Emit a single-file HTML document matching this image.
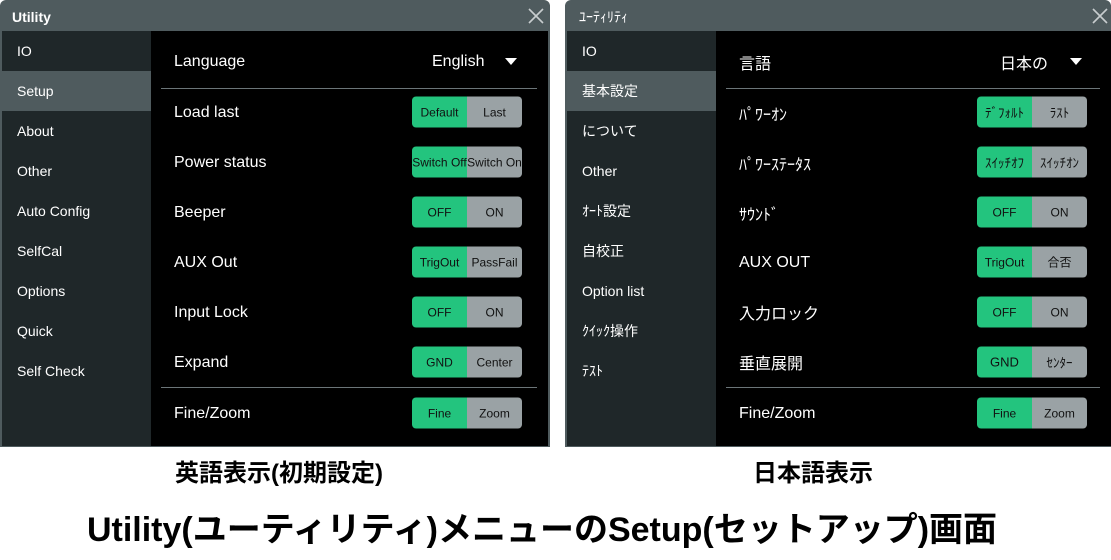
<!DOCTYPE html>
<html><head><meta charset="utf-8"><style>
*{margin:0;padding:0;box-sizing:border-box}
body{width:1111px;height:560px;background:#fff;position:relative;overflow:hidden;font-family:"Liberation Sans","Noto Sans CJK JP",sans-serif}
.p{position:absolute;top:0;height:447px;background:#4f5b5e;border-radius:6px 6px 0 0}
.tb{position:absolute;left:0;right:0;top:0;height:31px;color:#fff;font-size:14px;font-weight:bold;padding:9px 0 0 12px}
.x{position:absolute;right:4px;top:6px;width:20px;height:20px}
.sb{position:absolute;left:2px;top:31px;width:149px;bottom:1px;background:#1f2729}
.it{height:40px;line-height:40px;color:#fff;font-size:14px;padding-left:15px}
.it.s{background:#4f5b5e}
.ct{position:absolute;left:151px;top:31px;right:2px;bottom:1px;background:#000}
.r{position:absolute;left:23px;color:#fff;font-size:16px;transform:translateY(-50%)}
.sep{position:absolute;left:10px;right:11px;height:1px;background:#6b7578}
.tg{position:absolute;width:110px;height:31px;border-radius:4px;overflow:hidden;display:flex;font-size:12px;color:#111;transform:translateY(-50%)}
.tg span{flex:1;display:flex;align-items:center;justify-content:center;white-space:nowrap;background:#9aa2a5}
.tg span.g{background:#23c47e}
.tg.k{font-size:13px}
.lv{position:absolute;color:#fff;font-size:16px;transform:translateY(-50%)}
.tri{position:absolute;width:0;height:0;border-left:6px solid transparent;border-right:6px solid transparent;border-top:7px solid #fff}
.cap{position:absolute;font-weight:bold;color:#000;white-space:nowrap;transform:translateX(-50%)}
</style></head><body>

<div class="p" style="left:0;width:550px">
<div class="tb">Utility</div>
<svg class="x" viewBox="0 0 20 20"><path d="M3 3L17 17M17 3L3 17" stroke="#c8cdcf" stroke-width="1.6"/></svg>
<div class="sb">
<div class="it">IO</div><div class="it s">Setup</div><div class="it">About</div><div class="it">Other</div><div class="it">Auto Config</div><div class="it">SelfCal</div><div class="it">Options</div><div class="it">Quick</div><div class="it">Self Check</div>
</div>
<div class="ct">
<div class="r" style="top:31px">Language</div>
<div class="lv" style="top:31px;left:281px">English</div>
<div class="tri" style="top:27px;left:354px"></div>
<div class="sep" style="top:57px"></div>
<div class="r" style="top:82px">Load last</div><div class="tg" style="top:81px;left:261px"><span class="g">Default</span><span>Last</span></div>
<div class="r" style="top:132px">Power status</div><div class="tg" style="top:131px;left:261px"><span class="g">Switch Off</span><span>Switch On</span></div>
<div class="r" style="top:182px">Beeper</div><div class="tg" style="top:181px;left:261px"><span class="g">OFF</span><span>ON</span></div>
<div class="r" style="top:232px">AUX Out</div><div class="tg" style="top:231px;left:261px"><span class="g">TrigOut</span><span>PassFail</span></div>
<div class="r" style="top:282px">Input Lock</div><div class="tg" style="top:281px;left:261px"><span class="g">OFF</span><span>ON</span></div>
<div class="r" style="top:332px">Expand</div><div class="tg" style="top:331px;left:261px"><span class="g">GND</span><span>Center</span></div>
<div class="sep" style="top:356px"></div>
<div class="r" style="top:383px">Fine/Zoom</div><div class="tg" style="top:382px;left:261px"><span class="g">Fine</span><span>Zoom</span></div>
</div>
</div>

<div class="p" style="left:565px;width:546px">
<div class="tb" style="font-weight:normal;font-size:14px;padding:7px 0 0 14px">ﾕｰﾃｨﾘﾃｨ</div>
<svg class="x" viewBox="0 0 20 20" style="right:1px"><path d="M3 3L17 17M17 3L3 17" stroke="#c8cdcf" stroke-width="1.6"/></svg>
<div class="sb">
<div class="it">IO</div><div class="it s">基本設定</div><div class="it">について</div><div class="it">Other</div><div class="it">ｵｰﾄ設定</div><div class="it">自校正</div><div class="it">Option list</div><div class="it">ｸｲｯｸ操作</div><div class="it">ﾃｽﾄ</div>
</div>
<div class="ct" style="left:151px;right:0">
<div class="r" style="top:31px">言語</div>
<div class="lv" style="top:31px;left:284px">日本の</div>
<div class="tri" style="top:27px;left:354px"></div>
<div class="sep" style="top:57px"></div>
<div class="r" style="top:82px;font-size:16px">ﾊﾟﾜｰｵﾝ</div><div class="tg k" style="top:81px;left:261px"><span class="g">ﾃﾞﾌｫﾙﾄ</span><span>ﾗｽﾄ</span></div>
<div class="r" style="top:132px;font-size:16px">ﾊﾟﾜｰｽﾃｰﾀｽ</div><div class="tg k" style="top:131px;left:261px"><span class="g">ｽｲｯﾁｵﾌ</span><span>ｽｲｯﾁｵﾝ</span></div>
<div class="r" style="top:182px;font-size:16px">ｻｳﾝﾄﾞ</div><div class="tg" style="top:181px;left:261px"><span class="g">OFF</span><span>ON</span></div>
<div class="r" style="top:232px">AUX OUT</div><div class="tg" style="top:231px;left:261px"><span class="g">TrigOut</span><span>合否</span></div>
<div class="r" style="top:281px">入力ロック</div><div class="tg" style="top:281px;left:261px"><span class="g">OFF</span><span>ON</span></div>
<div class="r" style="top:331px">垂直展開</div><div class="tg k" style="top:331px;left:261px"><span class="g">GND</span><span>ｾﾝﾀｰ</span></div>
<div class="sep" style="top:356px"></div>
<div class="r" style="top:383px">Fine/Zoom</div><div class="tg" style="top:382px;left:261px"><span class="g">Fine</span><span>Zoom</span></div>
</div>
</div>

<div class="cap" style="left:279px;top:453px;font-size:24px">英語表示(初期設定)</div>
<div class="cap" style="left:813px;top:453px;font-size:24px">日本語表示</div>
<div class="cap" style="left:542px;top:502px;font-size:34px">Utility(ユーティリティ)メニューのSetup(セットアップ)画面</div>
</body></html>
